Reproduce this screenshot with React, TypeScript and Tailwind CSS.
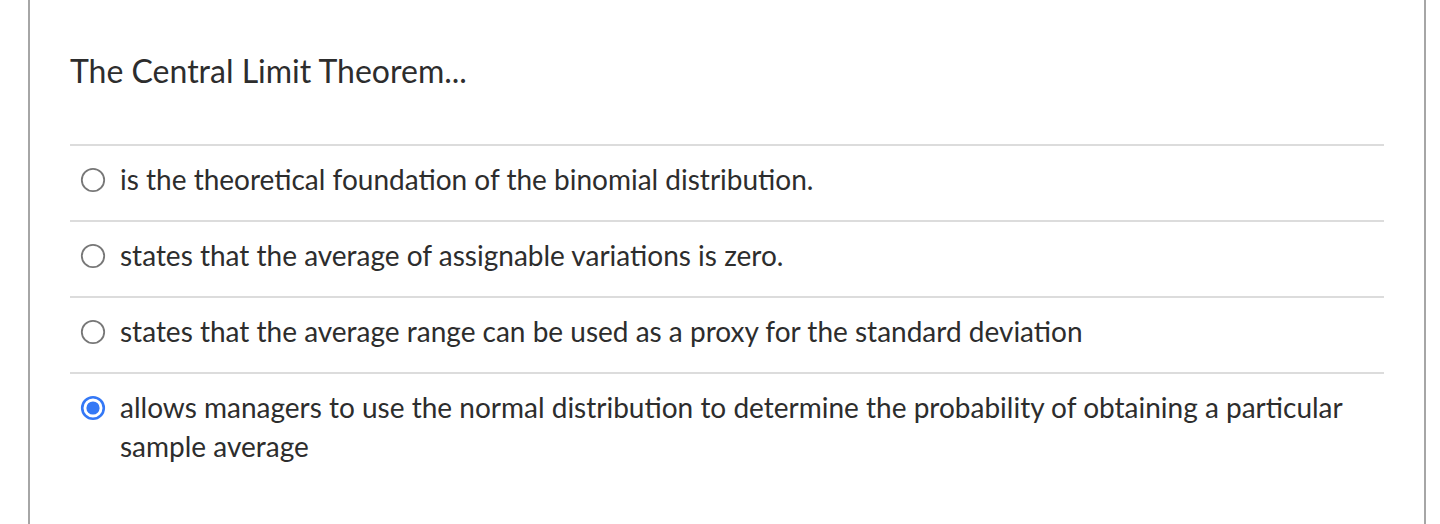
import React from "react";

const options = [
  "is the theoretical foundation of the binomial distribution.",
  "states that the average of assignable variations is zero.",
  "states that the average range can be used as a proxy for the standard deviation",
  "allows managers to use the normal distribution to determine the probability of obtaining a particular sample average",
];

function Radio({ checked }: { checked: boolean }) {
  return (
    <svg width="26" height="26" viewBox="0 0 26 26" className="shrink-0">
      {checked ? (
        <>
          <circle cx="13" cy="13" r="10.8" fill="none" stroke="#3478f6" strokeWidth="2.6" />
          <circle cx="13" cy="13" r="6.6" fill="#3478f6" />
        </>
      ) : (
        <circle cx="13" cy="13" r="11.2" fill="none" stroke="#777777" strokeWidth="1.8" />
      )}
    </svg>
  );
}

export default function App() {
  return (
    <div className="w-[1440px] h-[524px] bg-white overflow-hidden" style={{ fontFamily: "Lato, 'Liberation Sans', sans-serif" }}>
      <div className="ml-[28px] w-[1398px] h-full border-x-2 border-[#a6a6a6] px-[40px] text-[#2d2d2d]">
        <div className="h-[144px] pt-[51px]">
          <h1 className="text-[32px] leading-[40px] font-normal">The Central Limit Theorem...</h1>
        </div>
        <div>
          {options.map((o, i) => (
            <div key={i} className="border-t-2 border-[#dcdcdc] pt-[14px] pb-[20px] flex items-start gap-[14px] pl-[10px]">
              <div className="h-[40px] flex items-center">
                <Radio checked={i === 3} />
              </div>
              <div className="text-[28px] leading-[39px]">{o}</div>
            </div>
          ))}
        </div>
      </div>
    </div>
  );
}
